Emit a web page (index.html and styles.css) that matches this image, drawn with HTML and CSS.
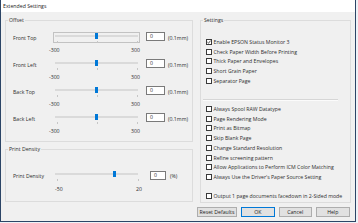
FILE: index.html
```html
<!DOCTYPE html>
<html>
<head>
<meta charset="utf-8">
<title>Extended Settings</title>
<link rel="stylesheet" href="styles.css">
</head>
<body>
<div class="window">
  <div class="titlebar">Extended Settings</div>
  <div class="main">
    <div class="col-left">
      <fieldset class="group offset">
        <legend>Offset</legend>
        <div class="rows">
          <div class="srow">
            <div class="sline">
              <span class="slabel">Front Top</span>
              <div class="slider focus">
                <div class="track"><span class="thumb" style="left:50%"></span></div>
                <div class="ticks"><i></i><i></i><i></i></div>
              </div>
              <span class="num">0</span>
              <span class="unit">(0.1mm)</span>
            </div>
            <div class="scale"><span>-300</span><span>300</span></div>
          </div>
          <div class="srow">
            <div class="sline">
              <span class="slabel">Front Left</span>
              <div class="slider">
                <div class="track"><span class="thumb" style="left:50%"></span></div>
                <div class="ticks"><i></i><i></i><i></i></div>
              </div>
              <span class="num">0</span>
              <span class="unit">(0.1mm)</span>
            </div>
            <div class="scale"><span>-300</span><span>300</span></div>
          </div>
          <div class="srow">
            <div class="sline">
              <span class="slabel">Back Top</span>
              <div class="slider">
                <div class="track"><span class="thumb" style="left:50%"></span></div>
                <div class="ticks"><i></i><i></i><i></i></div>
              </div>
              <span class="num">0</span>
              <span class="unit">(0.1mm)</span>
            </div>
            <div class="scale"><span>-300</span><span>300</span></div>
          </div>
          <div class="srow">
            <div class="sline">
              <span class="slabel">Back Left</span>
              <div class="slider">
                <div class="track"><span class="thumb" style="left:50%"></span></div>
                <div class="ticks"><i></i><i></i><i></i></div>
              </div>
              <span class="num">0</span>
              <span class="unit">(0.1mm)</span>
            </div>
            <div class="scale"><span>-300</span><span>300</span></div>
          </div>
        </div>
      </fieldset>
      <fieldset class="group density">
        <legend>Print Density</legend>
        <div class="rows density-rows">
          <div class="srow">
            <div class="sline">
              <span class="slabel">Print Density</span>
              <div class="slider">
                <div class="track"><span class="thumb" style="left:71.4%"></span></div>
                <div class="ticks ticks-two"><i></i><i></i></div>
              </div>
              <span class="num num-small">0</span>
              <span class="unit unit-wide">(%)</span>
            </div>
            <div class="scale scale-density"><span>-50</span><span>20</span></div>
          </div>
        </div>
      </fieldset>
    </div>
    <div class="col-right">
      <fieldset class="group settings">
        <legend>Settings</legend>
        <div class="checks">
          <div class="chk"><span class="box"><svg viewBox="0 0 4 4" width="4" height="4"><polyline points="0.4,2.1 1.5,3.2 3.6,0.6" fill="none" stroke="#222" stroke-width="0.8"/></svg></span>Enable EPSON Status Monitor 3</div>
          <div class="chk"><span class="box"></span>Check Paper Width Before Printing</div>
          <div class="chk"><span class="box"></span>Thick Paper and Envelopes</div>
          <div class="chk"><span class="box"></span>Short Grain Paper</div>
          <div class="chk"><span class="box"></span>Separator Page</div>
          <div class="sep"></div>
          <div class="chk"><span class="box"></span>Always Spool RAW Datatype</div>
          <div class="chk"><span class="box"></span>Page Rendering Mode</div>
          <div class="chk"><span class="box"></span>Print as Bitmap</div>
          <div class="chk"><span class="box"></span>Skip Blank Page</div>
          <div class="chk"><span class="box"></span>Change Standard Resolution</div>
          <div class="chk"><span class="box"></span>Refine screening pattern</div>
          <div class="chk"><span class="box"></span>Allow Applications to Perform ICM Color Matching</div>
          <div class="chk"><span class="box"></span>Always Use the Driver's Paper Source Setting</div>
          <div class="chk chk-last"><span class="box"></span>Output 1 page documents facedown in 2-Sided mode</div>
        </div>
      </fieldset>
      <div class="buttons">
        <div class="btn btn-wide">Reset Defaults</div>
        <div class="btn btn-default">OK</div>
        <div class="btn">Cancel</div>
        <div class="btn">Help</div>
      </div>
    </div>
  </div>
</div>
</body>
</html>
```

FILE: styles.css
```css
* { box-sizing: border-box; }
html, body { margin: 0; padding: 0; }
body {
  width: 358px;
  height: 223px;
  overflow: hidden;
  background: #eef2f7;
  font-family: "Open Sans", "Noto Sans", sans-serif;
  font-size: 5.2px;
  color: #2e2e2e;
}
.window {
  width: 356px;
  height: 222px;
  background: #f0f0f0;
  border: 1px solid #2c4566;
  border-top: none;
  display: flex;
  flex-direction: column;
}
.titlebar {
  height: 12px;
  background: #fff;
  padding: 2px 0 0 2px;
  line-height: 9px;
  color: #222;
}
.main {
  flex: 1;
  display: flex;
  gap: 4px;
  padding: 5px 0 0 4px;
}
.col-left {
  width: 188px;
  display: flex;
  flex-direction: column;
  gap: 4px;
}
.col-right {
  width: 154px;
  display: flex;
  flex-direction: column;
}
.group {
  margin: 0;
  padding: 0;
  min-width: 0;
  border: 1px solid #dcdcdc;
}
.group legend {
  margin-left: 2px;
  padding: 0 1px;
  line-height: 7px;
}
.offset { height: 125px; }
.density { height: 56px; }
.rows {
  display: flex;
  flex-direction: column;
  gap: 5px;
  padding: 8px 0 0 7px;
}
.density-rows { padding-top: 17px; }
.sline {
  display: flex;
  align-items: center;
  height: 11px;
}
.slabel { width: 40px; white-space: nowrap; }
.slider {
  width: 87px;
  height: 11px;
  border: 1px solid transparent;
}
.slider.focus { border-color: #c2c2c2; }
.track {
  position: relative;
  height: 2px;
  margin: 2px 1px 0 1px;
  background: #dadada;
}
.thumb {
  position: absolute;
  top: -2px;
  width: 3px;
  height: 6px;
  margin-left: -1.5px;
  background: #0078d7;
}
.ticks {
  display: flex;
  justify-content: space-between;
  height: 2px;
  margin-top: 4px;
  padding: 0 1px 0 3px;
}
.ticks-two { padding-right: 0; }
.ticks i {
  display: block;
  width: 1px;
  height: 2px;
  background: #c6c6c6;
}
.num {
  align-self: flex-start;
  width: 19px;
  height: 9px;
  margin-left: 6px;
  padding-left: 3px;
  border: 1px solid #7a7a7a;
  background: #fff;
  line-height: 7px;
}
.num-small { width: 16px; margin-left: 10px; margin-top: 1px; }
.unit { margin-left: 3px; white-space: nowrap; }
.unit-wide { margin-left: 4px; }
.scale {
  display: flex;
  justify-content: space-between;
  width: 91px;
  margin: 4px 0 0 36px;
  line-height: 7px;
}
.scale-density { width: 87px; margin: 5px 0 0 42px; }
.settings {
  margin-left: 3px;
  width: 151px;
  height: 186px;
}
.checks {
  display: flex;
  flex-direction: column;
  padding: 13px 0 0 5px;
}
.chk {
  display: flex;
  align-items: center;
  height: 9.7px;
  white-space: nowrap;
}
.chk-last { margin-top: 9.8px; }
.box {
  display: flex;
  align-items: center;
  justify-content: center;
  width: 6px;
  height: 6px;
  margin-right: 1.5px;
  border: 1px solid #3a3a3a;
  background: #fff;
  flex: none;
}
.sep {
  width: 135px;
  height: 2px;
  margin: 13.5px 0 3.3px -3px;
  border-top: 1px solid #d6d6d6;
  border-bottom: 1px solid #fbfbfb;
}
.buttons {
  display: flex;
  gap: 4px;
  height: 10px;
  margin-top: 4px;
}
.btn {
  width: 33.5px;
  display: flex;
  align-items: center;
  justify-content: center;
  border: 1px solid #adadad;
  background: #e1e1e1;
  white-space: nowrap;
  color: #222;
}
.btn-wide { width: 40px; }
.btn-default { border-color: #0078d7; }
```
